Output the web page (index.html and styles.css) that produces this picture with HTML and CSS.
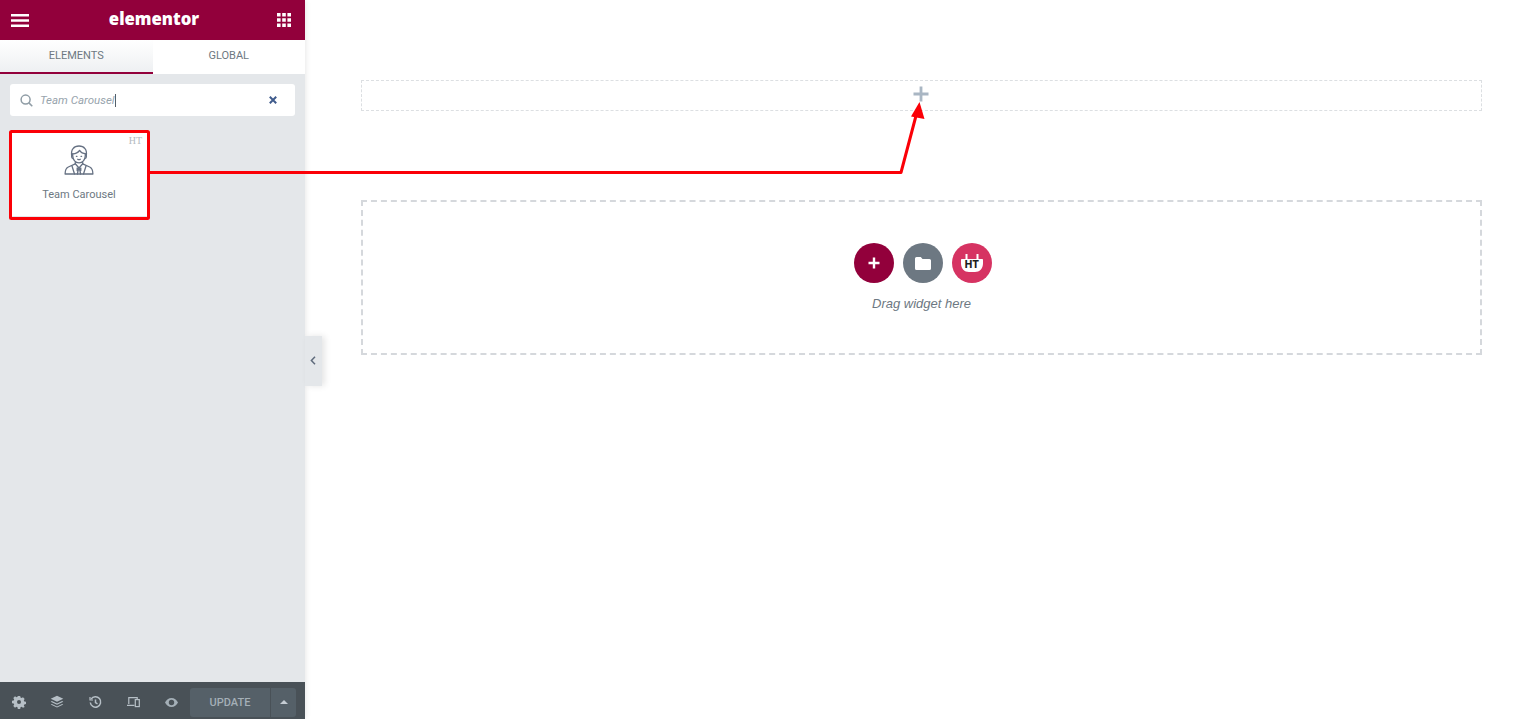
FILE: index.html
```html
<!DOCTYPE html>
<html lang="en">

<head>
    <meta charset="UTF-8" />
    <meta name="viewport" content="width=device-width, initial-scale=1.0" />
    <title>Team Carousel</title>
    <link rel="stylesheet" href="styles.css">
</head>

<body>
    <div class="editor">
        <aside class="panel">
            <header class="panel-header">
                <svg class="hamburger" width="18" height="13" viewBox="0 0 18 13" aria-hidden="true">
                    <path d="M0 1.200h18M0 6.500h18M0 11.800h18" stroke="#fff" stroke-width="2.400" />
                </svg>
                <span class="logo">elementor</span>
                <svg class="apps" width="14" height="14" viewBox="0 0 14 14" fill="#fff" aria-hidden="true">
                    <path d="M0 0h3.600v3.600H0zM5.200 0h3.600v3.600H5.200zM10.400 0H14v3.600h-3.600zM0 5.200h3.600v3.600H0zM5.200 5.200h3.600v3.600H5.200zM10.400 5.200H14v3.600h-3.600zM0 10.400h3.600V14H0zM5.200 10.400h3.600V14H5.200zM10.400 10.400H14V14h-3.600z" />
                </svg>
            </header>

            <nav class="tabs">
                <div class="tab tab-active">ELEMENTS</div>
                <div class="tab">GLOBAL</div>
            </nav>

            <div class="search">
                <svg width="13" height="13" viewBox="0 0 13 13" fill="none" stroke="#8f9ca5" stroke-width="1.500" aria-hidden="true">
                    <circle cx="5.600" cy="5.600" r="4.500" />
                    <path d="M8.900 8.900l3.400 3.400" />
                </svg>
                <span class="search-text">Team Carousel</span>
                <span class="caret"></span>
                <svg class="search-clear" width="8" height="8" viewBox="0 0 8 8" aria-hidden="true">
                    <path d="M.8.8l6.400 6.400M7.200.8L.8 7.200" stroke="#3f5b8c" stroke-width="2" />
                </svg>
            </div>

            <div class="widget">
                <span class="widget-badge">HT</span>
                <svg class="widget-icon" width="30" height="30" viewBox="0 0 30 30" fill="none" stroke="#667183" stroke-width="1.300" stroke-linejoin="round" stroke-linecap="round" aria-hidden="true">
                    <path d="M7.800 11C6.500 4.500 10 1 15 1s8.500 3.500 7.200 10" />
                    <path d="M8 8.800c3.200.2 6-1 7.600-3.400 1.200 2 3.200 3.200 6.400 3.400" />
                    <path d="M8.700 9v1.500c0 4.500 2.800 7.400 6.300 7.400s6.300-2.900 6.300-7.400V9" />
                    <path d="M8.300 10.300c-1 .3-.9 2.900.7 3M21.700 10.300c1 .3.900 2.900-.7 3" />
                    <path d="M11.300 17.500v1.300L4.300 22c-1.900.9-3.200 3-3.200 7h27.800c0-4-1.300-6.100-3.200-7l-7-3.200v-1.300" />
                    <path d="M11.300 18.800l3.700 4.200 3.700-4.200M8 21l2.500 8M22 21l-2.500 8" />
                    <path d="M13.200 23l1.800 1 1.800-1v2.600l-1.800-1-1.800 1zM14.200 25l-.8 4M15.800 25l.8 4" />
                    <path d="M12.400 11.300h.6M17 11.300h.6M13.800 14.300c.8.400 1.600.4 2.400 0" />
                </svg>
                <span class="widget-title">Team Carousel</span>
            </div>

            <footer class="panel-footer">
                <svg class="tool" width="12" height="12" viewBox="0 0 12 12" aria-hidden="true">
                    <path fill-rule="evenodd" fill="#b6bfc6" d="M4.800 0h2.400l.3 1.600 1.100.5L10 1.200l1.700 1.700-.9 1.400.5 1.100 1.700.3v2.400l-1.700.3-.5 1.100.9 1.400L10 11.700l-1.400-.9-1.100.5-.3 1.700H4.800l-.3-1.700-1.100-.5-1.400.9L.3 10l.9-1.400-.5-1.100L-1 7.200V4.800l1.700-.3.5-1.100-.9-1.400L2 .3l1.400.9 1.100-.5zM6 4a2 2 0 100 4 2 2 0 000-4z" />
                </svg>
                <svg class="tool" width="14" height="14" viewBox="0 0 14 14" fill="#b6bfc6" aria-hidden="true">
                    <path d="M7 .8l6.300 3L7 6.800.7 3.800zM1.900 6.100L7 8.500l5.100-2.400 1.200.6L7 9.700.7 6.700zM1.900 9L7 11.400 12.100 9l1.200.6L7 12.600.7 9.600z" />
                </svg>
                <svg class="tool" width="13" height="13" viewBox="0 0 13 13" fill="none" stroke="#b6bfc6" stroke-width="1.500" aria-hidden="true">
                    <path d="M2.100 3.100A5.200 5.200 0 111.300 6.500" />
                    <path d="M1 1v3h3" stroke-width="1.200" />
                    <path d="M6.500 3.500v3.200l2 1.200" />
                </svg>
                <svg class="tool" width="13" height="12" viewBox="0 0 13 12" fill="none" stroke="#b6bfc6" stroke-width="1.200" aria-hidden="true">
                    <path d="M1.800 8V1.600h8.400V3M0 9.400h7.500" />
                    <rect x="8.300" y="3.600" width="4" height="7" />
                </svg>
                <svg class="tool" width="13" height="9" viewBox="0 0 13 9" aria-hidden="true">
                    <path fill-rule="evenodd" fill="#a4afb7" d="M6.500 0C9.300 0 11.700 1.800 13 4.500 11.700 7.200 9.300 9 6.500 9S1.300 7.200 0 4.500C1.300 1.800 3.700 0 6.500 0zm0 1.800a2.700 2.700 0 100 5.400 2.700 2.700 0 000-5.400z" />
                </svg>
                <div class="update">
                    <span class="update-label">UPDATE</span>
                    <span class="update-arrow"></span>
                </div>
            </footer>
        </aside>

        <main class="canvas">
            <div class="collapse-tab">
                <svg width="6" height="9" viewBox="0 0 6 9" fill="none" stroke="#5f6b7c" stroke-width="1.500" aria-hidden="true">
                    <path d="M5 .8L1.400 4.500 5 8.200" />
                </svg>
            </div>

            <section class="drop-row">
                <svg width="16" height="16" viewBox="0 0 16 16" aria-hidden="true">
                    <path d="M8 .5v15M.5 8h15" stroke="#a9b6c3" stroke-width="2.800" />
                </svg>
            </section>

            <section class="drop-area">
                <div class="round-buttons">
                    <div class="round round-add">
                        <svg width="12" height="12" viewBox="0 0 12 12" aria-hidden="true">
                            <path d="M6 .5v11M.5 6h11" stroke="#fff" stroke-width="2.400" />
                        </svg>
                    </div>
                    <div class="round round-folder">
                        <svg width="16" height="13" viewBox="0 0 16 13" fill="#fff" aria-hidden="true">
                            <path d="M1.500 0h4.300l1.700 2h7A1.500 1.500 0 0116 3.500v8a1.500 1.500 0 01-1.500 1.500h-13A1.500 1.500 0 010 11.500v-10A1.500 1.500 0 011.500 0z" />
                        </svg>
                    </div>
                    <div class="round round-ht">
                        <svg class="plug" width="22" height="18" viewBox="0 0 22 18" aria-hidden="true">
                            <path fill="#fff" d="M4.500 0h2v5h9V0h2v5H21c.6 0 1 .4 1 1v3.500c0 5-3.500 8.500-8 8.500H8c-4.500 0-8-3.500-8-8.500V6c0-.6.400-1 1-1h3.500z" />
                        </svg>
                        <span class="ht-label">HT</span>
                    </div>
                </div>
                <p class="drop-hint">Drag widget here</p>
            </section>
        </main>
    </div>

    <!-- red annotation drawn over the screenshot -->
    <svg class="annotation" width="1536" height="719" viewBox="0 0 1536 719" aria-hidden="true">
        <rect x="10.500" y="131.500" width="138" height="87" rx="1" fill="none" stroke="#fb0007" stroke-width="3" />
        <path d="M147 172.500H901L917 112" fill="none" stroke="#fb0007" stroke-width="3" stroke-linejoin="round" />
        <path d="M919.500 102L924.500 119L911 116.500z" fill="#fb0007" />
    </svg>
</body>

</html>
```

FILE: styles.css
```css
* {
    box-sizing: border-box;
}

body {
    margin: 0;
    padding: 0;
    background: white;
    font-family: Roboto, "Liberation Sans", sans-serif;
    overflow: hidden;
}

.editor {
    display: flex;
    height: 719px;
}

/* left panel */
.panel {
    width: 305px;
    flex-shrink: 0;
    display: flex;
    flex-direction: column;
    background: #e4e7ea;
    box-shadow: 0 0 6px rgba(0, 0, 0, 0.12);
    position: relative;
}

.panel-header {
    height: 40px;
    background: #92003b;
    display: flex;
    align-items: center;
    justify-content: space-between;
    padding: 0 14px 0 11px;
    color: white;
}

.logo {
    font-family: "Open Sans", sans-serif;
    font-weight: 800;
    font-size: 16.7px;
    margin-left: 2px;
    margin-top: -3px;
}

.tabs {
    display: flex;
    height: 34px;
    background: white;
}

.tab {
    flex: 1;
    display: flex;
    align-items: center;
    justify-content: center;
    padding-bottom: 3px;
    font-size: 11px;
    color: #6d7882;
    background: white;
}

.tab-active {
    background: linear-gradient(180deg, white 0%, #eef0f2 100%);
    border-bottom: 2px solid #92003b;
    padding-bottom: 1px;
}

.search {
    margin: 10px 10px 0;
    height: 32px;
    background: white;
    border-radius: 3px;
    display: flex;
    align-items: center;
    padding: 0 18px 0 10px;
}

.search-text {
    margin-left: 7px;
    font-size: 11.5px;
    font-style: italic;
    color: #98a4ad;
}

.caret {
    width: 1px;
    height: 13px;
    background: #55606a;
}

.search-clear {
    margin-left: auto;
}

.widget {
    margin: 15px 0 0 11px;
    width: 136px;
    height: 85px;
    background: white;
    display: flex;
    flex-direction: column;
    align-items: center;
    position: relative;
}

.widget-badge {
    position: absolute;
    top: 4px;
    right: 5px;
    font-family: "Liberation Serif", serif;
    font-size: 10px;
    color: #b4bac0;
}

.widget-icon {
    margin-top: 14px;
}

.widget-title {
    margin-top: 13px;
    font-size: 11px;
    color: #6d7882;
}

.panel-footer {
    margin-top: auto;
    height: 37px;
    background: #495157;
    display: flex;
    align-items: center;
    padding: 3px 9px 0 13px;
    gap: 25px;
}

.tool {
    flex-shrink: 0;
    overflow: visible;
}

.update {
    flex-shrink: 0;
    margin-left: -13px;
    width: 106px;
    height: 29px;
    display: flex;
    border-radius: 3px;
    overflow: hidden;
    background: #556068;
}

.update-label {
    flex: 1;
    display: flex;
    align-items: center;
    justify-content: center;
    font-size: 11px;
    font-weight: 500;
    color: #a4afb7;
    border-right: 1px solid #495157;
}

.update-arrow {
    width: 25px;
    position: relative;
}

.update-arrow::after {
    content: "";
    position: absolute;
    left: 9px;
    top: 12px;
    border: 4px solid transparent;
    border-top: 0;
    border-bottom: 4px solid #c5ccd3;
}

/* preview area */
.canvas {
    flex: 1;
    position: relative;
    padding: 80px 54px 0 56px;
}

.collapse-tab {
    position: absolute;
    left: 0;
    top: 336px;
    width: 17px;
    height: 50px;
    padding: 0 2px 2px 0;
    background: #e4e7ea;
    display: flex;
    align-items: center;
    justify-content: center;
    box-shadow: 3px 0 6px rgba(0, 0, 0, 0.1);
}

.drop-row {
    height: 31px;
    border: 1px dashed #dcdfe2;
    display: flex;
    align-items: center;
    justify-content: center;
    padding: 0 2px 3px 0;
}

.drop-area {
    margin-top: 89px;
    height: 155px;
    border: 2px dashed #d5d8dc;
    display: flex;
    flex-direction: column;
    align-items: center;
    padding-top: 41px;
}

.round-buttons {
    display: flex;
    gap: 9px;
    padding-left: 2px;
}

.round {
    width: 40px;
    height: 40px;
    border-radius: 50%;
    display: flex;
    align-items: center;
    justify-content: center;
    position: relative;
}

.round-add {
    background: #92003b;
}

.round-folder {
    background: #6d7882;
}

.round-ht {
    background: #d63362;
}

.ht-label {
    position: absolute;
    left: 1px;
    right: 0;
    top: 15px;
    text-align: center;
    font-family: Inter, sans-serif;
    font-weight: 800;
    font-size: 10px;
    color: #1e1e1e;
}

.drop-hint {
    margin: 13px 0 0;
    font-family: "Liberation Sans", sans-serif;
    font-size: 13px;
    font-style: italic;
    color: #6d7882;
}

.annotation {
    position: absolute;
    left: 0;
    top: 0;
    pointer-events: none;
}
```
